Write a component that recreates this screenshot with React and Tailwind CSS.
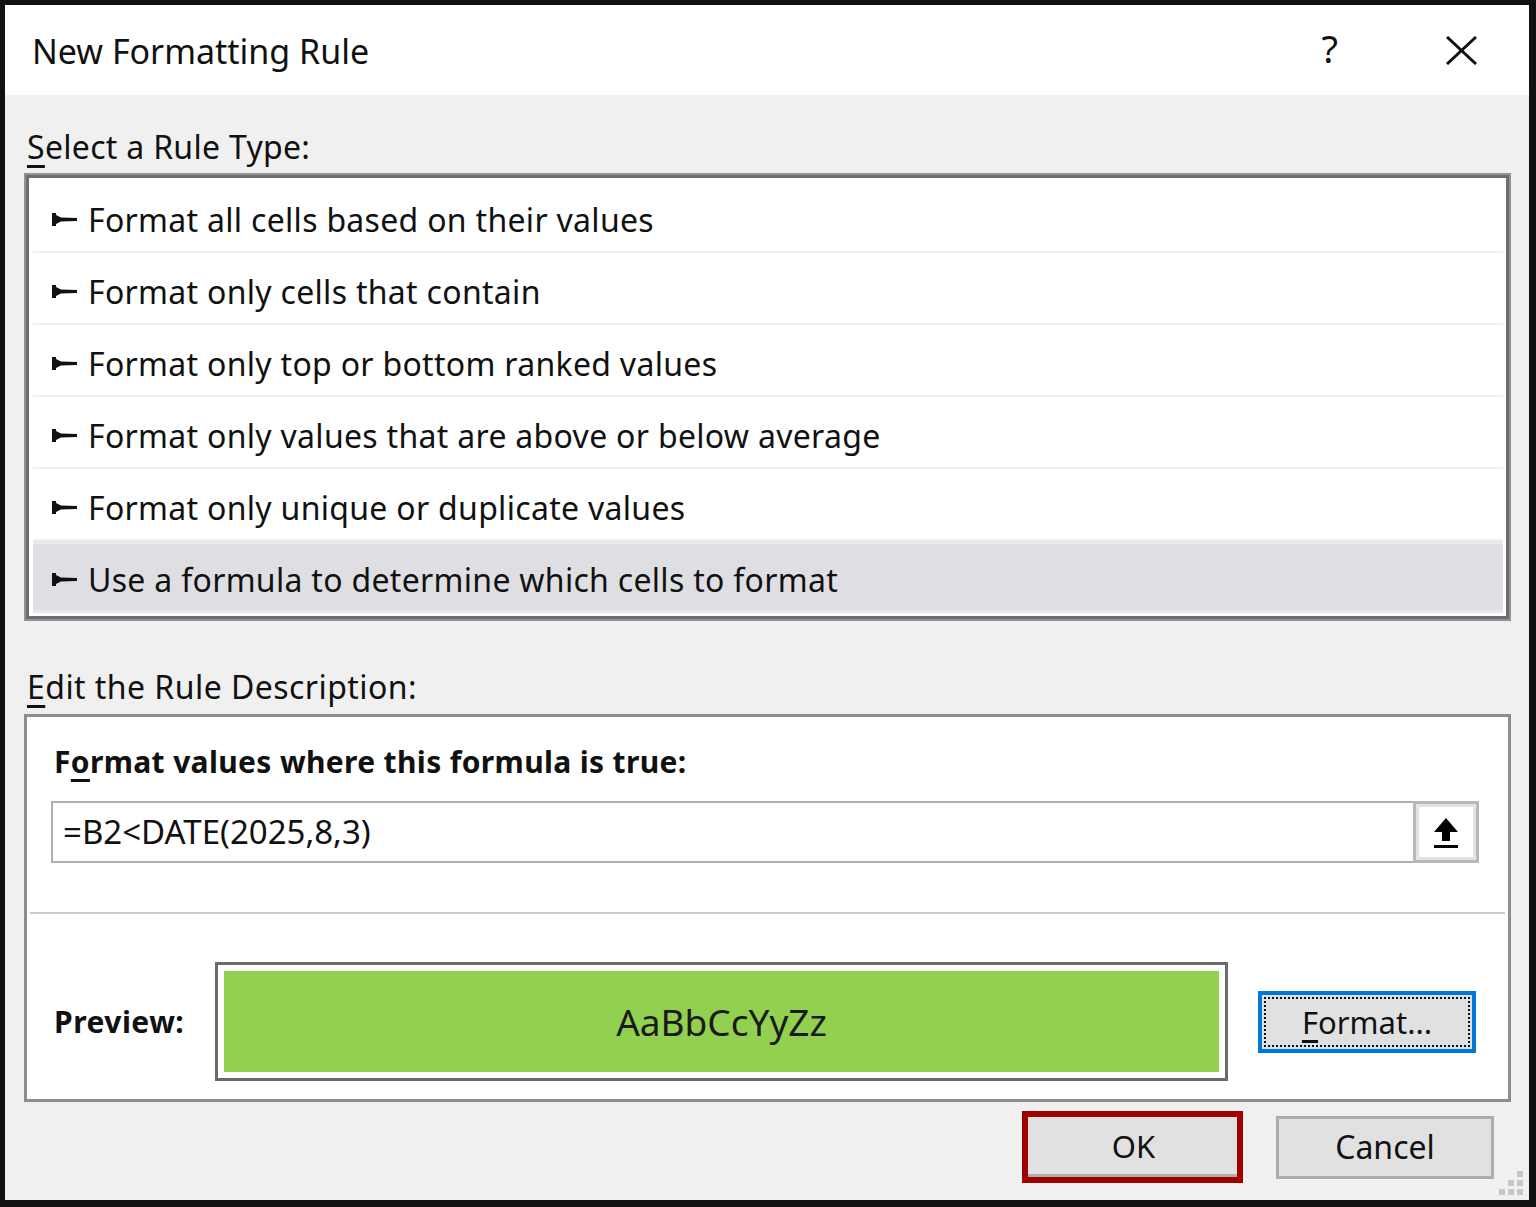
import React from "react";

function Bullet() {
  return (
    <svg width="25" height="13" viewBox="0 0 25 13" className="shrink-0">
      <polygon points="0,0 4,0 4,2 9,4.5 25,5 25,8 9,8.5 4,11 4,13 0,13" fill="#111" />
    </svg>
  );
}

function UploadIcon() {
  return (
    <svg width="24" height="30" viewBox="0 0 24 30">
      <polygon points="12,0 24,14 16,14 16,23 8,23 8,14 0,14" fill="#000" />
      <rect x="0" y="27" width="24" height="3" fill="#000" />
    </svg>
  );
}

const rules = [
  "Format all cells based on their values",
  "Format only cells that contain",
  "Format only top or bottom ranked values",
  "Format only values that are above or below average",
  "Format only unique or duplicate values",
  "Use a formula to determine which cells to format",
];

export default function App() {
  return (
    <div className="w-[1536px] h-[1207px] bg-[#111] pt-[5px] pl-[5px] pr-[7px] pb-[7px] font-['Noto_Sans',sans-serif] text-[#111]">
      <div className="relative flex flex-col h-full bg-[#f0f0f0]">
        {/* Title bar */}
        <div className="h-[90px] bg-white flex items-center pl-[27px] pr-[52px] shrink-0">
          <div className="text-[34px] leading-[40px] pt-[2px]">New Formatting Rule</div>
          <div className="ml-auto flex items-center gap-[108px]">
            <span className="text-[38px] leading-[40px] pb-[4px]">?</span>
            <svg width="31" height="29" viewBox="0 0 31 29">
              <line x1="1" y1="1" x2="30" y2="28" stroke="#111" strokeWidth="3" />
              <line x1="30" y1="1" x2="1" y2="28" stroke="#111" strokeWidth="3" />
            </svg>
          </div>
        </div>

        {/* Body */}
        <div className="flex flex-col pl-[19px] pr-[18px] pt-[32px]">
          <div className="text-[32px] leading-[40px] pl-[3px] mb-[6px] tracking-[0.3px]">
            <span className="underline decoration-[3px] underline-offset-[6px]">S</span>elect a Rule Type:
          </div>

          {/* Rule list */}
          <div className="h-[448px] border-2 border-[#8f9297]">
            <div className="h-full border-[3px] border-[#6b6d72] bg-white pt-[3px] pb-[3px] pl-[4px] pr-[3px] flex flex-col">
              {rules.map((r, i) => {
                const selected = i === rules.length - 1;
                return (
                  <div
                    key={r}
                    className={
                      selected
                        ? "h-[72px] flex items-center gap-[11px] pl-[19px] pt-[5px] bg-[#dfdfe3] border-y-[3px] border-[#e9e9ec] text-[32px] tracking-[0.3px]"
                        : "h-[72px] flex items-center gap-[11px] pl-[19px] pt-[7px] border-b-2 border-[#f0f0f0] text-[32px] tracking-[0.3px]"
                    }
                  >
                    <Bullet />
                    <span className="leading-[40px]">{r}</span>
                  </div>
                );
              })}
            </div>
          </div>

          <div className="text-[32px] leading-[40px] pl-[3px] mt-[46px] mb-[7px] tracking-[0.45px]">
            <span className="underline decoration-[3px] underline-offset-[6px]">E</span>dit the Rule Description:
          </div>

          {/* Description box */}
          <div className="h-[388px] border-[3px] border-[#8a8d93] bg-white flex flex-col">
            <div className="pl-[27px] pt-[26px] text-[30px] leading-[38px] font-bold tracking-[0.35px]">
              F<span className="underline decoration-[3px] underline-offset-[6px]">o</span>rmat values where this formula is true:
            </div>
            <div className="ml-[24px] mt-[20px] w-[1428px] h-[62px] flex">
              <div className="flex-1 border-2 border-r-0 border-[#b0b0b0] flex items-center pl-[10px] text-[33px] leading-[40px]">
                =B2&lt;DATE(2025,8,3)
              </div>
              <div className="w-[66px] border-[3px] border-[#b9b9bd]">
                <div className="h-full border-[3px] border-[#e3e3e3] bg-white flex items-center justify-center pt-[2px]">
                  <UploadIcon />
                </div>
              </div>
            </div>
            <div className="mx-[3px] mt-[49px] h-[2px] bg-[#cacaca]" />
            <div className="mt-[48px] flex items-center pl-[27px]">
              <div className="w-[161px] text-[30px] leading-[38px] font-bold tracking-[0.5px]">Preview:</div>
              <div className="w-[1013px] h-[119px] border-[3px] border-[#6b6b6b] bg-white p-[6px]">
                <div className="h-full bg-[#92d050] flex items-center justify-center text-[37px] leading-[40px] text-[#1a1a1a]">
                  AaBbCcYyZz
                </div>
              </div>
              <div className="ml-[30px] w-[218px] h-[62px] border-4 border-[#0078d7] bg-[#e1e1e1] p-[2px]">
                <div className="h-full border-2 border-dotted border-[#111] flex items-center justify-center text-[31px] leading-[38px]">
                  <span>
                    <span className="underline decoration-[3px] underline-offset-[6px]">F</span>ormat...
                  </span>
                </div>
              </div>
            </div>
          </div>
        </div>

        {/* Buttons */}
        <div className="flex justify-end items-center gap-[33px] pt-[9px] pr-[35px]">
          <div className="w-[221px] h-[72px] border-[6px] border-[#a00000] bg-[#e1e1e1]">
            <div className="h-full border-b-[3px] border-[#adadad] flex items-center justify-center text-[31px] leading-[40px] pl-[2px]">
              OK
            </div>
          </div>
          <div className="w-[218px] h-[63px] border-[3px] border-[#adadad] bg-[#e1e1e1] flex items-center justify-center text-[32px] leading-[40px]">
            Cancel
          </div>
        </div>

        {/* Resize grip */}
        <div className="absolute right-[6px] bottom-[5px] grid grid-cols-3 gap-[3px]">
          <span className="w-[6px] h-[6px]" />
          <span className="w-[6px] h-[6px]" />
          <span className="w-[6px] h-[6px] bg-[#c6c6c6]" />
          <span className="w-[6px] h-[6px]" />
          <span className="w-[6px] h-[6px] bg-[#c6c6c6]" />
          <span className="w-[6px] h-[6px] bg-[#c6c6c6]" />
          <span className="w-[6px] h-[6px] bg-[#c6c6c6]" />
          <span className="w-[6px] h-[6px] bg-[#c6c6c6]" />
          <span className="w-[6px] h-[6px] bg-[#c6c6c6]" />
        </div>
      </div>
    </div>
  );
}
